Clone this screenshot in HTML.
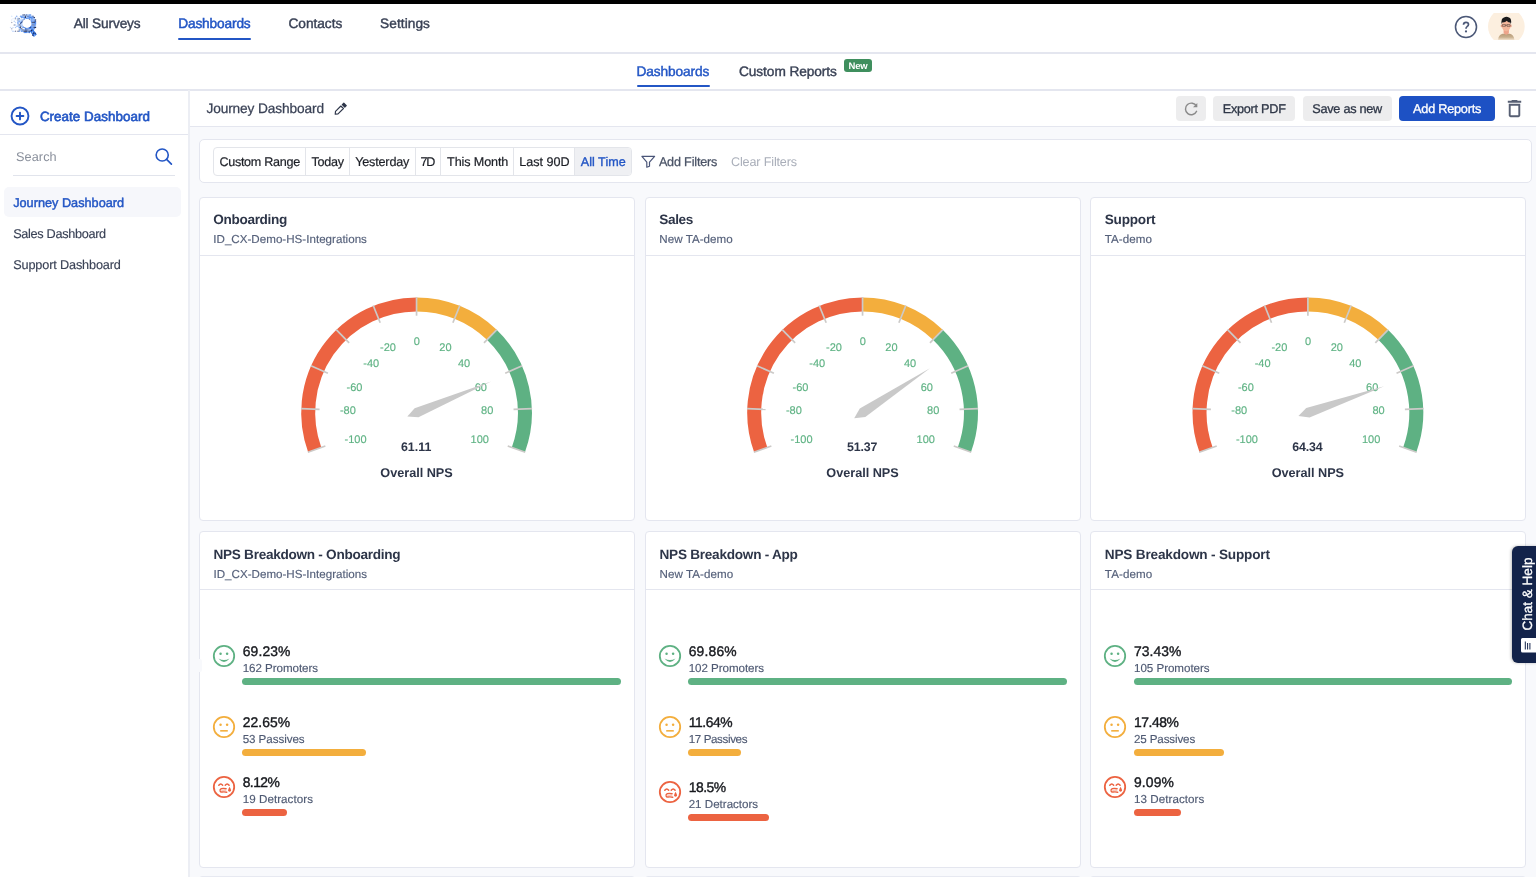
<!DOCTYPE html>
<html><head><meta charset="utf-8"><title>Dashboards</title>
<style>
html,body{margin:0;padding:0}
body{width:1536px;height:877px;overflow:hidden;position:relative;background:#fff;font-family:"Liberation Sans",sans-serif}
.t{position:absolute;white-space:nowrap;line-height:1;display:block}
.r{position:absolute;display:block}
#app{position:absolute;left:0;top:0;width:1536px;height:877px;will-change:transform;text-rendering:geometricPrecision;overflow:hidden}
</style></head><body>
<svg width="0" height="0" style="position:absolute"><defs>
<g id="face0" fill="none" stroke="#5eb183" stroke-width="1.8"><circle cx="12" cy="12" r="10.2"/><circle cx="8.55" cy="9.72" r="1.25" fill="#5eb183" stroke="none"/><circle cx="15.1" cy="9.72" r="1.25" fill="#5eb183" stroke="none"/><path d="M6.5 14.4Q12 21.6 17.5 14.4Q12 17.8 6.5 14.4Z" fill="#5eb183" stroke="none"/></g>
<g id="face1" fill="none" stroke="#f3ae3d" stroke-width="1.8"><circle cx="12" cy="12" r="10.2"/><circle cx="8.55" cy="9.74" r="1.25" fill="#f3ae3d" stroke="none"/><circle cx="15.1" cy="9.74" r="1.25" fill="#f3ae3d" stroke="none"/><path d="M8.2 15.83H15.8" stroke-width="1.6"/></g>
<g id="face2" fill="none" stroke="#ec6341" stroke-width="1.8" stroke-linecap="round" stroke-linejoin="round"><circle cx="12" cy="12" r="10.2"/><path d="M6.8 10.3Q8.7 7.7 10.7 10.3 M13.2 10.3Q15.2 7.7 17.1 10.3" stroke-width="1.45"/><path d="M14.1 13.7Q11 13.0 9.3 13.7Q7.7 14.5 8.1 16.0Q8.5 17.2 10 17.0Q12.5 16.6 14.7 17.2" stroke-width="1.4"/><path d="M9.8 15.3Q11.8 14.9 13.8 15.3" stroke-width="1.1" opacity="0.45"/><path d="M17.55 11.7Q19 14.2 19 15.3A1.45 1.45 0 0 1 16.1 15.3Q16.1 14.2 17.55 11.7Z" fill="#ec6341" stroke="none"/></g>
</defs></svg>

<div id="app">
<div class="r" style="left:0px;top:0px;width:1536px;height:4px;background:#000"></div>
<div class="r" style="left:0px;top:52px;width:1536px;height:1.5px;background:#e4e6ef"></div>
<span class="t" style="left:73.70px;top:17px;font-size:13.7px;letter-spacing:-0.152px;color:#3a4256;-webkit-text-stroke:0.4px #3a4256;">All Surveys</span>
<span class="t" style="left:178.20px;top:17px;font-size:13.7px;letter-spacing:-0.142px;color:#2356c5;-webkit-text-stroke:0.5px #2356c5;">Dashboards</span>
<div class="r" style="left:178.2px;top:38.2px;width:72.6px;height:2.1px;background:#2356c5;border-radius:1px"></div>
<span class="t" style="left:288.50px;top:17px;font-size:13.7px;letter-spacing:-0.038px;color:#3a4256;-webkit-text-stroke:0.4px #3a4256;">Contacts</span>
<span class="t" style="left:380.00px;top:17px;font-size:13.7px;letter-spacing:0.071px;color:#3a4256;-webkit-text-stroke:0.4px #3a4256;">Settings</span>
<div class="r" style="left:0px;top:89px;width:1536px;height:1.5px;background:#e4e6ef"></div>
<span class="t" style="left:636.50px;top:65px;font-size:13.7px;letter-spacing:-0.119px;color:#2356c5;-webkit-text-stroke:0.45px #2356c5;">Dashboards</span>
<div class="r" style="left:636.5px;top:84.5px;width:73px;height:2.1px;background:#2356c5;border-radius:1px"></div>
<span class="t" style="left:739.00px;top:65px;font-size:13.7px;letter-spacing:-0.075px;color:#3a4256;-webkit-text-stroke:0.4px #3a4256;">Custom Reports</span>
<div class="r" style="left:844px;top:59.2px;width:28px;height:12.8px;background:#3f8f5e;border-radius:3px"></div>
<span class="t" style="left:848.60px;top:62px;font-size:9.5px;letter-spacing:-0.267px;color:#fff;font-weight:bold;">New</span>
<div class="r" style="left:188px;top:90px;width:1.5px;height:787px;background:#eceef4"></div>
<span class="t" style="left:39.90px;top:110px;font-size:13.4px;letter-spacing:0.040px;color:#2356c5;-webkit-text-stroke:0.6px #2356c5;">Create Dashboard</span>
<div class="r" style="left:0px;top:134.3px;width:188px;height:1.2px;background:#e4e6ef"></div>
<span class="t" style="left:16.00px;top:151px;font-size:12.7px;letter-spacing:0.092px;color:#8a909c;">Search</span>
<div class="r" style="left:12.8px;top:175.2px;width:162.4px;height:1.3px;background:#e1e4ec"></div>
<div class="r" style="left:3.8px;top:187.4px;width:177.2px;height:29.2px;background:#f6f7fb;border-radius:5px"></div>
<span class="t" style="left:13.20px;top:197px;font-size:12.7px;letter-spacing:0.010px;color:#2356c5;-webkit-text-stroke:0.45px #2356c5;">Journey Dashboard</span>
<span class="t" style="left:13.20px;top:228px;font-size:12.7px;letter-spacing:-0.316px;color:#3a4256;-webkit-text-stroke:0.15px #3a4256;">Sales Dashboard</span>
<span class="t" style="left:13.20px;top:259px;font-size:12.7px;letter-spacing:-0.146px;color:#3a4256;-webkit-text-stroke:0.15px #3a4256;">Support Dashboard</span>
<div class="r" style="left:189.5px;top:90.5px;width:1347px;height:36px;background:#fff"></div>
<div class="r" style="left:189.5px;top:126px;width:1347px;height:1.2px;background:#e4e6ef"></div>
<div class="r" style="left:189.5px;top:127.2px;width:1347px;height:750px;background:#f8f9fc"></div>
<span class="t" style="left:206.40px;top:102px;font-size:13.7px;letter-spacing:-0.104px;color:#3a4256;-webkit-text-stroke:0.25px #3a4256;">Journey Dashboard</span>
<div class="r" style="left:1176.3px;top:95.5px;width:29.6px;height:25.7px;background:#ededee;border-radius:4px"></div>
<div class="r" style="left:1213.1px;top:95.5px;width:82.3px;height:25.7px;background:#ededee;border-radius:4px"></div>
<div class="r" style="left:1302.7px;top:95.5px;width:88.9px;height:25.7px;background:#ededee;border-radius:4px"></div>
<div class="r" style="left:1398.9px;top:95.5px;width:96.5px;height:25.7px;background:#1d51c4;border-radius:4px"></div>
<span class="t" style="left:1222.70px;top:103px;font-size:12.7px;letter-spacing:-0.259px;color:#2f3747;-webkit-text-stroke:0.3px #2f3747;">Export PDF</span>
<span class="t" style="left:1312.30px;top:103px;font-size:12.7px;letter-spacing:-0.272px;color:#2f3747;-webkit-text-stroke:0.3px #2f3747;">Save as new</span>
<span class="t" style="left:1413.10px;top:103px;font-size:12.7px;letter-spacing:-0.230px;color:#fff;-webkit-text-stroke:0.3px #fff;">Add Reports</span>
<div class="r" style="left:199px;top:138.5px;width:1333px;height:44px;background:#fff;border:1px solid #e4e6ef;border-radius:5px;box-sizing:border-box"></div>
<div class="r" style="left:213.2px;top:147.3px;width:419px;height:28.3px;background:#fff;border:1px solid #e3e5ea;border-radius:4px;box-sizing:border-box"></div>
<div class="r" style="left:574.7px;top:148.3px;width:56.5px;height:26.3px;background:#eff0f3;border-radius:0 3px 3px 0"></div>
<div class="r" style="left:305.0px;top:148.3px;width:1px;height:26.3px;background:#e3e5ea"></div>
<div class="r" style="left:348.9px;top:148.3px;width:1px;height:26.3px;background:#e3e5ea"></div>
<div class="r" style="left:414.5px;top:148.3px;width:1px;height:26.3px;background:#e3e5ea"></div>
<div class="r" style="left:440.1px;top:148.3px;width:1px;height:26.3px;background:#e3e5ea"></div>
<div class="r" style="left:513.0px;top:148.3px;width:1px;height:26.3px;background:#e3e5ea"></div>
<div class="r" style="left:574.2px;top:148.3px;width:1px;height:26.3px;background:#e3e5ea"></div>
<span class="t" style="left:219.40px;top:156px;font-size:12.6px;letter-spacing:-0.295px;color:#1c1f26;-webkit-text-stroke:0.2px #1c1f26;">Custom Range</span>
<span class="t" style="left:311.50px;top:156px;font-size:12.6px;letter-spacing:-0.281px;color:#1c1f26;-webkit-text-stroke:0.2px #1c1f26;">Today</span>
<span class="t" style="left:355.20px;top:156px;font-size:12.6px;letter-spacing:-0.172px;color:#1c1f26;-webkit-text-stroke:0.2px #1c1f26;">Yesterday</span>
<span class="t" style="left:420.50px;top:156px;font-size:12.6px;letter-spacing:-1.207px;color:#1c1f26;-webkit-text-stroke:0.2px #1c1f26;">7D</span>
<span class="t" style="left:447.10px;top:156px;font-size:12.6px;letter-spacing:-0.125px;color:#1c1f26;-webkit-text-stroke:0.2px #1c1f26;">This Month</span>
<span class="t" style="left:519.25px;top:156px;font-size:12.6px;letter-spacing:-0.026px;color:#1c1f26;-webkit-text-stroke:0.2px #1c1f26;">Last 90D</span>
<span class="t" style="left:580.70px;top:156px;font-size:12.6px;letter-spacing:0.041px;color:#2356c5;-webkit-text-stroke:0.35px #2356c5;">All Time</span>
<span class="t" style="left:658.90px;top:156px;font-size:12.6px;letter-spacing:-0.172px;color:#4a5366;-webkit-text-stroke:0.25px #4a5366;">Add Filters</span>
<span class="t" style="left:731.00px;top:156px;font-size:12.6px;letter-spacing:-0.151px;color:#a9aeb9;">Clear Filters</span>
<div class="r" style="left:199.1px;top:196.5px;width:435.8px;height:324px;background:#fff;border:1px solid #e4e6ef;border-radius:4px;box-sizing:border-box"></div>
<div class="r" style="left:199.6px;top:254.7px;width:434.8px;height:1px;background:#e4e6ef"></div>
<span class="t" style="left:213.30px;top:213px;font-size:13.6px;letter-spacing:-0.340px;color:#2d3548;font-weight:bold;">Onboarding</span>
<span class="t" style="left:213.30px;top:234px;font-size:11.6px;letter-spacing:0.011px;color:#55607a;-webkit-text-stroke:0.15px #55607a;">ID_CX-Demo-HS-Integrations</span>
<span class="t" style="left:344.59px;top:435px;font-size:11px;letter-spacing:0.000px;color:#5fb384;-webkit-text-stroke:0.15px #5fb384;">-100</span>
<span class="t" style="left:339.95px;top:406px;font-size:11px;letter-spacing:0.000px;color:#5fb384;-webkit-text-stroke:0.15px #5fb384;">-80</span>
<span class="t" style="left:346.55px;top:383px;font-size:11px;letter-spacing:0.000px;color:#5fb384;-webkit-text-stroke:0.15px #5fb384;">-60</span>
<span class="t" style="left:363.35px;top:359px;font-size:11px;letter-spacing:0.000px;color:#5fb384;-webkit-text-stroke:0.15px #5fb384;">-40</span>
<span class="t" style="left:380.05px;top:343px;font-size:11px;letter-spacing:0.000px;color:#5fb384;-webkit-text-stroke:0.15px #5fb384;">-20</span>
<span class="t" style="left:413.69px;top:337px;font-size:11px;letter-spacing:0.000px;color:#5fb384;-webkit-text-stroke:0.15px #5fb384;">0</span>
<span class="t" style="left:439.28px;top:343px;font-size:11px;letter-spacing:0.000px;color:#5fb384;-webkit-text-stroke:0.15px #5fb384;">20</span>
<span class="t" style="left:457.88px;top:359px;font-size:11px;letter-spacing:0.000px;color:#5fb384;-webkit-text-stroke:0.15px #5fb384;">40</span>
<span class="t" style="left:474.68px;top:383px;font-size:11px;letter-spacing:0.000px;color:#5fb384;-webkit-text-stroke:0.15px #5fb384;">60</span>
<span class="t" style="left:481.08px;top:406px;font-size:11px;letter-spacing:0.000px;color:#5fb384;-webkit-text-stroke:0.15px #5fb384;">80</span>
<span class="t" style="left:470.62px;top:435px;font-size:11px;letter-spacing:0.000px;color:#5fb384;-webkit-text-stroke:0.15px #5fb384;">100</span>
<span class="t" style="left:400.90px;top:441px;font-size:12.4px;letter-spacing:0.038px;color:#2d3548;font-weight:bold;">61.11</span>
<span class="t" style="left:380.30px;top:467px;font-size:12.7px;letter-spacing:-0.021px;color:#2d3548;font-weight:bold;">Overall NPS</span>
<div class="r" style="left:645.1px;top:196.5px;width:435.8px;height:324px;background:#fff;border:1px solid #e4e6ef;border-radius:4px;box-sizing:border-box"></div>
<div class="r" style="left:645.6px;top:254.7px;width:434.8px;height:1px;background:#e4e6ef"></div>
<span class="t" style="left:659.30px;top:213px;font-size:13.6px;letter-spacing:-0.385px;color:#2d3548;font-weight:bold;">Sales</span>
<span class="t" style="left:659.30px;top:234px;font-size:11.6px;letter-spacing:0.044px;color:#55607a;-webkit-text-stroke:0.15px #55607a;">New TA-demo</span>
<span class="t" style="left:790.59px;top:435px;font-size:11px;letter-spacing:0.000px;color:#5fb384;-webkit-text-stroke:0.15px #5fb384;">-100</span>
<span class="t" style="left:785.95px;top:406px;font-size:11px;letter-spacing:0.000px;color:#5fb384;-webkit-text-stroke:0.15px #5fb384;">-80</span>
<span class="t" style="left:792.55px;top:383px;font-size:11px;letter-spacing:0.000px;color:#5fb384;-webkit-text-stroke:0.15px #5fb384;">-60</span>
<span class="t" style="left:809.35px;top:359px;font-size:11px;letter-spacing:0.000px;color:#5fb384;-webkit-text-stroke:0.15px #5fb384;">-40</span>
<span class="t" style="left:826.05px;top:343px;font-size:11px;letter-spacing:0.000px;color:#5fb384;-webkit-text-stroke:0.15px #5fb384;">-20</span>
<span class="t" style="left:859.69px;top:337px;font-size:11px;letter-spacing:0.000px;color:#5fb384;-webkit-text-stroke:0.15px #5fb384;">0</span>
<span class="t" style="left:885.28px;top:343px;font-size:11px;letter-spacing:0.000px;color:#5fb384;-webkit-text-stroke:0.15px #5fb384;">20</span>
<span class="t" style="left:903.88px;top:359px;font-size:11px;letter-spacing:0.000px;color:#5fb384;-webkit-text-stroke:0.15px #5fb384;">40</span>
<span class="t" style="left:920.68px;top:383px;font-size:11px;letter-spacing:0.000px;color:#5fb384;-webkit-text-stroke:0.15px #5fb384;">60</span>
<span class="t" style="left:927.08px;top:406px;font-size:11px;letter-spacing:0.000px;color:#5fb384;-webkit-text-stroke:0.15px #5fb384;">80</span>
<span class="t" style="left:916.62px;top:435px;font-size:11px;letter-spacing:0.000px;color:#5fb384;-webkit-text-stroke:0.15px #5fb384;">100</span>
<span class="t" style="left:846.90px;top:441px;font-size:12.4px;letter-spacing:-0.133px;color:#2d3548;font-weight:bold;">51.37</span>
<span class="t" style="left:826.30px;top:467px;font-size:12.7px;letter-spacing:-0.021px;color:#2d3548;font-weight:bold;">Overall NPS</span>
<div class="r" style="left:1090.45px;top:196.5px;width:435.8px;height:324px;background:#fff;border:1px solid #e4e6ef;border-radius:4px;box-sizing:border-box"></div>
<div class="r" style="left:1090.95px;top:254.7px;width:434.8px;height:1px;background:#e4e6ef"></div>
<span class="t" style="left:1104.65px;top:213px;font-size:13.6px;letter-spacing:-0.187px;color:#2d3548;font-weight:bold;">Support</span>
<span class="t" style="left:1104.65px;top:234px;font-size:11.6px;letter-spacing:0.076px;color:#55607a;-webkit-text-stroke:0.15px #55607a;">TA-demo</span>
<span class="t" style="left:1235.94px;top:435px;font-size:11px;letter-spacing:0.000px;color:#5fb384;-webkit-text-stroke:0.15px #5fb384;">-100</span>
<span class="t" style="left:1231.30px;top:406px;font-size:11px;letter-spacing:0.000px;color:#5fb384;-webkit-text-stroke:0.15px #5fb384;">-80</span>
<span class="t" style="left:1237.90px;top:383px;font-size:11px;letter-spacing:0.000px;color:#5fb384;-webkit-text-stroke:0.15px #5fb384;">-60</span>
<span class="t" style="left:1254.70px;top:359px;font-size:11px;letter-spacing:0.000px;color:#5fb384;-webkit-text-stroke:0.15px #5fb384;">-40</span>
<span class="t" style="left:1271.40px;top:343px;font-size:11px;letter-spacing:0.000px;color:#5fb384;-webkit-text-stroke:0.15px #5fb384;">-20</span>
<span class="t" style="left:1305.04px;top:337px;font-size:11px;letter-spacing:0.000px;color:#5fb384;-webkit-text-stroke:0.15px #5fb384;">0</span>
<span class="t" style="left:1330.63px;top:343px;font-size:11px;letter-spacing:0.000px;color:#5fb384;-webkit-text-stroke:0.15px #5fb384;">20</span>
<span class="t" style="left:1349.23px;top:359px;font-size:11px;letter-spacing:0.000px;color:#5fb384;-webkit-text-stroke:0.15px #5fb384;">40</span>
<span class="t" style="left:1366.03px;top:383px;font-size:11px;letter-spacing:0.000px;color:#5fb384;-webkit-text-stroke:0.15px #5fb384;">60</span>
<span class="t" style="left:1372.43px;top:406px;font-size:11px;letter-spacing:0.000px;color:#5fb384;-webkit-text-stroke:0.15px #5fb384;">80</span>
<span class="t" style="left:1361.97px;top:435px;font-size:11px;letter-spacing:0.000px;color:#5fb384;-webkit-text-stroke:0.15px #5fb384;">100</span>
<span class="t" style="left:1292.25px;top:441px;font-size:12.4px;letter-spacing:-0.133px;color:#2d3548;font-weight:bold;">64.34</span>
<span class="t" style="left:1271.65px;top:467px;font-size:12.7px;letter-spacing:-0.021px;color:#2d3548;font-weight:bold;">Overall NPS</span>
<svg class="r" style="left:0;top:0" width="1536" height="877" viewBox="0 0 1536 877"><path d="M314.73 449.81 A108.35 108.35 0 0 1 416.55 304.40" stroke="#ec6341" stroke-width="14" fill="none"/><path d="M416.55 304.40 A108.35 108.35 0 0 1 491.82 334.81" stroke="#f3ae3d" stroke-width="14" fill="none"/><path d="M491.82 334.81 A108.35 108.35 0 0 1 518.37 449.81" stroke="#5eb183" stroke-width="14" fill="none"/><line x1="307.87" y1="452.30" x2="325.35" y2="445.94" stroke="#cccac8" stroke-width="1.7"/><line x1="300.97" y1="408.71" x2="319.56" y2="409.36" stroke="#cccac8" stroke-width="1.7"/><line x1="310.90" y1="365.71" x2="327.89" y2="373.28" stroke="#cccac8" stroke-width="1.7"/><line x1="336.21" y1="329.56" x2="349.13" y2="342.94" stroke="#cccac8" stroke-width="1.7"/><line x1="373.23" y1="305.52" x2="380.19" y2="322.77" stroke="#cccac8" stroke-width="1.7"/><line x1="416.55" y1="297.10" x2="416.55" y2="315.70" stroke="#cccac8" stroke-width="1.7"/><line x1="459.87" y1="305.52" x2="452.91" y2="322.77" stroke="#cccac8" stroke-width="1.7"/><line x1="496.89" y1="329.56" x2="483.97" y2="342.94" stroke="#cccac8" stroke-width="1.7"/><line x1="522.20" y1="365.71" x2="505.21" y2="373.28" stroke="#cccac8" stroke-width="1.7"/><line x1="532.13" y1="408.71" x2="513.54" y2="409.36" stroke="#cccac8" stroke-width="1.7"/><line x1="525.23" y1="452.30" x2="507.75" y2="445.94" stroke="#cccac8" stroke-width="1.7"/><polygon points="407.33,416.62 414.61,408.14 491.05,381.47 418.49,417.36" fill="#c9c9c9"/><path d="M760.73 449.81 A108.35 108.35 0 0 1 862.55 304.40" stroke="#ec6341" stroke-width="14" fill="none"/><path d="M862.55 304.40 A108.35 108.35 0 0 1 937.82 334.81" stroke="#f3ae3d" stroke-width="14" fill="none"/><path d="M937.82 334.81 A108.35 108.35 0 0 1 964.37 449.81" stroke="#5eb183" stroke-width="14" fill="none"/><line x1="753.87" y1="452.30" x2="771.35" y2="445.94" stroke="#cccac8" stroke-width="1.7"/><line x1="746.97" y1="408.71" x2="765.56" y2="409.36" stroke="#cccac8" stroke-width="1.7"/><line x1="756.90" y1="365.71" x2="773.89" y2="373.28" stroke="#cccac8" stroke-width="1.7"/><line x1="782.21" y1="329.56" x2="795.13" y2="342.94" stroke="#cccac8" stroke-width="1.7"/><line x1="819.23" y1="305.52" x2="826.19" y2="322.77" stroke="#cccac8" stroke-width="1.7"/><line x1="862.55" y1="297.10" x2="862.55" y2="315.70" stroke="#cccac8" stroke-width="1.7"/><line x1="905.87" y1="305.52" x2="898.91" y2="322.77" stroke="#cccac8" stroke-width="1.7"/><line x1="942.89" y1="329.56" x2="929.97" y2="342.94" stroke="#cccac8" stroke-width="1.7"/><line x1="968.20" y1="365.71" x2="951.21" y2="373.28" stroke="#cccac8" stroke-width="1.7"/><line x1="978.13" y1="408.71" x2="959.54" y2="409.36" stroke="#cccac8" stroke-width="1.7"/><line x1="971.23" y1="452.30" x2="953.75" y2="445.94" stroke="#cccac8" stroke-width="1.7"/><polygon points="854.21,418.27 859.79,408.58 929.93,368.16 865.31,416.92" fill="#c9c9c9"/><path d="M1206.08 449.81 A108.35 108.35 0 0 1 1307.90 304.40" stroke="#ec6341" stroke-width="14" fill="none"/><path d="M1307.90 304.40 A108.35 108.35 0 0 1 1383.17 334.81" stroke="#f3ae3d" stroke-width="14" fill="none"/><path d="M1383.17 334.81 A108.35 108.35 0 0 1 1409.72 449.81" stroke="#5eb183" stroke-width="14" fill="none"/><line x1="1199.22" y1="452.30" x2="1216.70" y2="445.94" stroke="#cccac8" stroke-width="1.7"/><line x1="1192.32" y1="408.71" x2="1210.91" y2="409.36" stroke="#cccac8" stroke-width="1.7"/><line x1="1202.25" y1="365.71" x2="1219.24" y2="373.28" stroke="#cccac8" stroke-width="1.7"/><line x1="1227.56" y1="329.56" x2="1240.48" y2="342.94" stroke="#cccac8" stroke-width="1.7"/><line x1="1264.58" y1="305.52" x2="1271.54" y2="322.77" stroke="#cccac8" stroke-width="1.7"/><line x1="1307.90" y1="297.10" x2="1307.90" y2="315.70" stroke="#cccac8" stroke-width="1.7"/><line x1="1351.22" y1="305.52" x2="1344.26" y2="322.77" stroke="#cccac8" stroke-width="1.7"/><line x1="1388.24" y1="329.56" x2="1375.32" y2="342.94" stroke="#cccac8" stroke-width="1.7"/><line x1="1413.55" y1="365.71" x2="1396.56" y2="373.28" stroke="#cccac8" stroke-width="1.7"/><line x1="1423.48" y1="408.71" x2="1404.89" y2="409.36" stroke="#cccac8" stroke-width="1.7"/><line x1="1416.58" y1="452.30" x2="1399.10" y2="445.94" stroke="#cccac8" stroke-width="1.7"/><polygon points="1298.46,416.04 1306.25,408.03 1384.19,386.14 1309.55,417.47" fill="#c9c9c9"/></svg>
<div class="r" style="left:199.1px;top:531px;width:435.8px;height:336.5px;background:#fff;border:1px solid #e4e6ef;border-radius:4px;box-sizing:border-box"></div>
<div class="r" style="left:199.6px;top:589.2px;width:434.8px;height:1px;background:#e4e6ef"></div>
<span class="t" style="left:213.50px;top:548px;font-size:13.6px;letter-spacing:-0.280px;color:#2d3548;font-weight:bold;">NPS Breakdown - Onboarding</span>
<span class="t" style="left:213.50px;top:569px;font-size:11.6px;letter-spacing:0.007px;color:#55607a;-webkit-text-stroke:0.15px #55607a;">ID_CX-Demo-HS-Integrations</span>
<span class="t" style="left:242.70px;top:645px;font-size:13.9px;letter-spacing:0.131px;color:#16181d;-webkit-text-stroke:0.38px #16181d;">69.23%</span>
<span class="t" style="left:242.70px;top:663px;font-size:11.6px;letter-spacing:-0.057px;color:#4f5a73;-webkit-text-stroke:0.15px #4f5a73;">162 Promoters</span>
<div class="r" style="left:242.39999999999998px;top:677.6px;width:378.3px;height:7.4px;background:#5eb183;border-radius:4px"></div>
<svg class="r" style="left:212.05px;top:643.60px" width="24" height="24" viewBox="0 0 24 24"><use href="#face0"/></svg>
<span class="t" style="left:242.70px;top:716px;font-size:13.9px;letter-spacing:0.051px;color:#16181d;-webkit-text-stroke:0.38px #16181d;">22.65%</span>
<span class="t" style="left:242.70px;top:734px;font-size:11.6px;letter-spacing:-0.064px;color:#4f5a73;-webkit-text-stroke:0.15px #4f5a73;">53 Passives</span>
<div class="r" style="left:242.39999999999998px;top:748.6px;width:123.89999999999999px;height:7.4px;background:#f3ae3d;border-radius:4px"></div>
<svg class="r" style="left:212.05px;top:715.06px" width="24" height="24" viewBox="0 0 24 24"><use href="#face1"/></svg>
<span class="t" style="left:242.70px;top:776px;font-size:13.9px;letter-spacing:-0.553px;color:#16181d;-webkit-text-stroke:0.38px #16181d;">8.12%</span>
<span class="t" style="left:242.70px;top:794px;font-size:11.6px;letter-spacing:0.056px;color:#4f5a73;-webkit-text-stroke:0.15px #4f5a73;">19 Detractors</span>
<div class="r" style="left:242.39999999999998px;top:808.6px;width:44.4px;height:7.4px;background:#ec6341;border-radius:4px"></div>
<svg class="r" style="left:212.05px;top:774.80px" width="24" height="24" viewBox="0 0 24 24"><use href="#face2"/></svg>
<div class="r" style="left:645.1px;top:531px;width:435.8px;height:336.5px;background:#fff;border:1px solid #e4e6ef;border-radius:4px;box-sizing:border-box"></div>
<div class="r" style="left:645.6px;top:589.2px;width:434.8px;height:1px;background:#e4e6ef"></div>
<span class="t" style="left:659.50px;top:548px;font-size:13.6px;letter-spacing:-0.254px;color:#2d3548;font-weight:bold;">NPS Breakdown - App</span>
<span class="t" style="left:659.50px;top:569px;font-size:11.6px;letter-spacing:0.074px;color:#55607a;-webkit-text-stroke:0.15px #55607a;">New TA-demo</span>
<span class="t" style="left:688.70px;top:645px;font-size:13.9px;letter-spacing:0.171px;color:#16181d;-webkit-text-stroke:0.38px #16181d;">69.86%</span>
<span class="t" style="left:688.70px;top:663px;font-size:11.6px;letter-spacing:-0.057px;color:#4f5a73;-webkit-text-stroke:0.15px #4f5a73;">102 Promoters</span>
<div class="r" style="left:688.4000000000001px;top:677.6px;width:378.3px;height:7.4px;background:#5eb183;border-radius:4px"></div>
<svg class="r" style="left:658.05px;top:643.60px" width="24" height="24" viewBox="0 0 24 24"><use href="#face0"/></svg>
<span class="t" style="left:688.70px;top:716px;font-size:13.9px;letter-spacing:-0.422px;color:#16181d;-webkit-text-stroke:0.38px #16181d;">11.64%</span>
<span class="t" style="left:688.70px;top:734px;font-size:11.6px;letter-spacing:-0.374px;color:#4f5a73;-webkit-text-stroke:0.15px #4f5a73;">17 Passives</span>
<div class="r" style="left:688.4000000000001px;top:748.6px;width:52.5px;height:7.4px;background:#f3ae3d;border-radius:4px"></div>
<svg class="r" style="left:658.05px;top:715.06px" width="24" height="24" viewBox="0 0 24 24"><use href="#face1"/></svg>
<span class="t" style="left:688.70px;top:781px;font-size:13.9px;letter-spacing:-0.503px;color:#16181d;-webkit-text-stroke:0.38px #16181d;">18.5%</span>
<span class="t" style="left:688.70px;top:799px;font-size:11.6px;letter-spacing:-0.011px;color:#4f5a73;-webkit-text-stroke:0.15px #4f5a73;">21 Detractors</span>
<div class="r" style="left:688.4000000000001px;top:813.6px;width:81.0px;height:7.4px;background:#ec6341;border-radius:4px"></div>
<svg class="r" style="left:658.05px;top:779.80px" width="24" height="24" viewBox="0 0 24 24"><use href="#face2"/></svg>
<div class="r" style="left:1090.45px;top:531px;width:435.8px;height:336.5px;background:#fff;border:1px solid #e4e6ef;border-radius:4px;box-sizing:border-box"></div>
<div class="r" style="left:1090.95px;top:589.2px;width:434.8px;height:1px;background:#e4e6ef"></div>
<span class="t" style="left:1104.85px;top:548px;font-size:13.6px;letter-spacing:-0.185px;color:#2d3548;font-weight:bold;">NPS Breakdown - Support</span>
<span class="t" style="left:1104.85px;top:569px;font-size:11.6px;letter-spacing:0.109px;color:#55607a;-webkit-text-stroke:0.15px #55607a;">TA-demo</span>
<span class="t" style="left:1134.05px;top:645px;font-size:13.9px;letter-spacing:0.031px;color:#16181d;-webkit-text-stroke:0.38px #16181d;">73.43%</span>
<span class="t" style="left:1134.05px;top:663px;font-size:11.6px;letter-spacing:-0.040px;color:#4f5a73;-webkit-text-stroke:0.15px #4f5a73;">105 Promoters</span>
<div class="r" style="left:1133.75px;top:677.6px;width:378.3px;height:7.4px;background:#5eb183;border-radius:4px"></div>
<svg class="r" style="left:1103.40px;top:643.60px" width="24" height="24" viewBox="0 0 24 24"><use href="#face0"/></svg>
<span class="t" style="left:1134.05px;top:716px;font-size:13.9px;letter-spacing:-0.469px;color:#16181d;-webkit-text-stroke:0.38px #16181d;">17.48%</span>
<span class="t" style="left:1134.05px;top:734px;font-size:11.6px;letter-spacing:-0.134px;color:#4f5a73;-webkit-text-stroke:0.15px #4f5a73;">25 Passives</span>
<div class="r" style="left:1133.75px;top:748.6px;width:90.3px;height:7.4px;background:#f3ae3d;border-radius:4px"></div>
<svg class="r" style="left:1103.40px;top:715.06px" width="24" height="24" viewBox="0 0 24 24"><use href="#face1"/></svg>
<span class="t" style="left:1134.05px;top:776px;font-size:13.9px;letter-spacing:0.097px;color:#16181d;-webkit-text-stroke:0.38px #16181d;">9.09%</span>
<span class="t" style="left:1134.05px;top:794px;font-size:11.6px;letter-spacing:0.048px;color:#4f5a73;-webkit-text-stroke:0.15px #4f5a73;">13 Detractors</span>
<div class="r" style="left:1133.75px;top:808.6px;width:46.9px;height:7.4px;background:#ec6341;border-radius:4px"></div>
<svg class="r" style="left:1103.40px;top:774.80px" width="24" height="24" viewBox="0 0 24 24"><use href="#face2"/></svg>
<div class="r" style="left:198.4px;top:659.2px;width:3.9px;height:12.8px;background:#f8f9fc;border-radius:0 2px 2px 0"></div>
<div class="r" style="left:199.1px;top:876.4px;width:435.8px;height:6px;background:#fff;border:1px solid #e4e6ef;border-radius:4px;box-sizing:border-box;opacity:.8"></div>
<div class="r" style="left:645.1px;top:876.4px;width:435.8px;height:6px;background:#fff;border:1px solid #e4e6ef;border-radius:4px;box-sizing:border-box;opacity:.8"></div>
<div class="r" style="left:1090.45px;top:876.4px;width:435.8px;height:6px;background:#fff;border:1px solid #e4e6ef;border-radius:4px;box-sizing:border-box;opacity:.8"></div>
<svg class="r" style="left:0px;top:4px" width="60" height="46" viewBox="0 4 60 46"><rect x="22.38" y="14.38" width="1.25" height="1.25" fill="#23448f" opacity="0.93" transform="rotate(30 23.00 15.00)"/><rect x="23.62" y="14.38" width="1.25" height="1.25" fill="#1a2750" opacity="0.96" transform="rotate(30 24.25 15.00)"/><rect x="24.88" y="14.38" width="1.25" height="1.25" fill="#8fb8f6" opacity="0.98" transform="rotate(30 25.50 15.00)"/><rect x="26.12" y="14.38" width="1.25" height="1.25" fill="#23448f" opacity="1.00" transform="rotate(30 26.75 15.00)"/><rect x="27.38" y="14.38" width="1.25" height="1.25" fill="#8fb8f6" opacity="1.00" transform="rotate(30 28.00 15.00)"/><rect x="28.62" y="14.38" width="1.25" height="1.25" fill="#3f7fe9" opacity="1.00" transform="rotate(30 29.25 15.00)"/><rect x="29.88" y="14.38" width="1.25" height="1.25" fill="#3f7fe9" opacity="1.00" transform="rotate(30 30.50 15.00)"/><rect x="11.12" y="15.62" width="1.25" height="1.25" fill="#8fb8f6" opacity="0.40" transform="rotate(30 11.75 16.25)"/><rect x="16.12" y="15.62" width="1.25" height="1.25" fill="#3f7fe9" opacity="0.68" transform="rotate(30 16.75 16.25)"/><rect x="19.88" y="15.62" width="1.25" height="1.25" fill="#3f7fe9" opacity="0.88" transform="rotate(30 20.50 16.25)"/><rect x="21.12" y="15.62" width="1.25" height="1.25" fill="#3f7fe9" opacity="0.91" transform="rotate(30 21.75 16.25)"/><rect x="22.38" y="15.62" width="1.25" height="1.25" fill="#3f7fe9" opacity="0.93" transform="rotate(30 23.00 16.25)"/><rect x="23.62" y="15.62" width="1.25" height="1.25" fill="#8fb8f6" opacity="0.96" transform="rotate(30 24.25 16.25)"/><rect x="24.88" y="15.62" width="1.25" height="1.25" fill="#1a2750" opacity="0.98" transform="rotate(30 25.50 16.25)"/><rect x="26.12" y="15.62" width="1.25" height="1.25" fill="#8fb8f6" opacity="1.00" transform="rotate(30 26.75 16.25)"/><rect x="27.38" y="15.62" width="1.25" height="1.25" fill="#23448f" opacity="1.00" transform="rotate(30 28.00 16.25)"/><rect x="28.62" y="15.62" width="1.25" height="1.25" fill="#3f7fe9" opacity="1.00" transform="rotate(30 29.25 16.25)"/><rect x="29.88" y="15.62" width="1.25" height="1.25" fill="#6fa2f2" opacity="1.00" transform="rotate(30 30.50 16.25)"/><rect x="31.12" y="15.62" width="1.25" height="1.25" fill="#6fa2f2" opacity="1.00" transform="rotate(30 31.75 16.25)"/><rect x="32.38" y="15.62" width="1.25" height="1.25" fill="#23448f" opacity="1.00" transform="rotate(30 33.00 16.25)"/><rect x="14.88" y="16.88" width="1.25" height="1.25" fill="#6fa2f2" opacity="0.61" transform="rotate(30 15.50 17.50)"/><rect x="17.38" y="16.88" width="1.25" height="1.25" fill="#cfe0fb" opacity="0.74" transform="rotate(30 18.00 17.50)"/><rect x="19.88" y="16.88" width="1.25" height="1.25" fill="#cfe0fb" opacity="0.88" transform="rotate(30 20.50 17.50)"/><rect x="21.12" y="16.88" width="1.25" height="1.25" fill="#3f7fe9" opacity="0.91" transform="rotate(30 21.75 17.50)"/><rect x="22.38" y="16.88" width="1.25" height="1.25" fill="#3f7fe9" opacity="0.93" transform="rotate(30 23.00 17.50)"/><rect x="23.62" y="16.88" width="1.25" height="1.25" fill="#3f7fe9" opacity="0.96" transform="rotate(30 24.25 17.50)"/><rect x="24.88" y="16.88" width="1.25" height="1.25" fill="#1c2b5e" opacity="0.98" transform="rotate(30 25.50 17.50)"/><rect x="26.12" y="16.88" width="1.25" height="1.25" fill="#8fb8f6" opacity="1.00" transform="rotate(30 26.75 17.50)"/><rect x="27.38" y="16.88" width="1.25" height="1.25" fill="#6fa2f2" opacity="1.00" transform="rotate(30 28.00 17.50)"/><rect x="28.62" y="16.88" width="1.25" height="1.25" fill="#3f7fe9" opacity="1.00" transform="rotate(30 29.25 17.50)"/><rect x="29.88" y="16.88" width="1.25" height="1.25" fill="#3f7fe9" opacity="1.00" transform="rotate(30 30.50 17.50)"/><rect x="31.12" y="16.88" width="1.25" height="1.25" fill="#3f7fe9" opacity="1.00" transform="rotate(30 31.75 17.50)"/><rect x="32.38" y="16.88" width="1.25" height="1.25" fill="#3f7fe9" opacity="1.00" transform="rotate(30 33.00 17.50)"/><rect x="33.62" y="16.88" width="1.25" height="1.25" fill="#1a2750" opacity="1.00" transform="rotate(30 34.25 17.50)"/><rect x="12.38" y="18.12" width="1.25" height="1.25" fill="#cfe0fb" opacity="0.47" transform="rotate(30 13.00 18.75)"/><rect x="13.62" y="18.12" width="1.25" height="1.25" fill="#cfe0fb" opacity="0.54" transform="rotate(30 14.25 18.75)"/><rect x="14.88" y="18.12" width="1.25" height="1.25" fill="#55607a" opacity="0.61" transform="rotate(30 15.50 18.75)"/><rect x="17.38" y="18.12" width="1.25" height="1.25" fill="#3f7fe9" opacity="0.74" transform="rotate(30 18.00 18.75)"/><rect x="18.62" y="18.12" width="1.25" height="1.25" fill="#55607a" opacity="0.86" transform="rotate(30 19.25 18.75)"/><rect x="21.12" y="18.12" width="1.25" height="1.25" fill="#cfe0fb" opacity="0.91" transform="rotate(30 21.75 18.75)"/><rect x="23.62" y="18.12" width="1.25" height="1.25" fill="#3f7fe9" opacity="0.96" transform="rotate(30 24.25 18.75)"/><rect x="24.88" y="18.12" width="1.25" height="1.25" fill="#8fb8f6" opacity="0.98" transform="rotate(30 25.50 18.75)"/><rect x="26.12" y="18.12" width="1.25" height="1.25" fill="#3f7fe9" opacity="1.00" transform="rotate(30 26.75 18.75)"/><rect x="27.38" y="18.12" width="1.25" height="1.25" fill="#3f7fe9" opacity="1.00" transform="rotate(30 28.00 18.75)"/><rect x="28.62" y="18.12" width="1.25" height="1.25" fill="#3f7fe9" opacity="1.00" transform="rotate(30 29.25 18.75)"/><rect x="29.88" y="18.12" width="1.25" height="1.25" fill="#8fb8f6" opacity="1.00" transform="rotate(30 30.50 18.75)"/><rect x="31.12" y="18.12" width="1.25" height="1.25" fill="#3f7fe9" opacity="1.00" transform="rotate(30 31.75 18.75)"/><rect x="32.38" y="18.12" width="1.25" height="1.25" fill="#3f7fe9" opacity="1.00" transform="rotate(30 33.00 18.75)"/><rect x="33.62" y="18.12" width="1.25" height="1.25" fill="#8fb8f6" opacity="1.00" transform="rotate(30 34.25 18.75)"/><rect x="11.12" y="19.38" width="1.25" height="1.25" fill="#a9c8f8" opacity="0.40" transform="rotate(30 11.75 20.00)"/><rect x="16.12" y="19.38" width="1.25" height="1.25" fill="#cfe0fb" opacity="0.68" transform="rotate(30 16.75 20.00)"/><rect x="17.38" y="19.38" width="1.25" height="1.25" fill="#55607a" opacity="0.83" transform="rotate(30 18.00 20.00)"/><rect x="18.62" y="19.38" width="1.25" height="1.25" fill="#8fb8f6" opacity="0.86" transform="rotate(30 19.25 20.00)"/><rect x="19.88" y="19.38" width="1.25" height="1.25" fill="#a9c8f8" opacity="0.88" transform="rotate(30 20.50 20.00)"/><rect x="21.12" y="19.38" width="1.25" height="1.25" fill="#a9c8f8" opacity="0.91" transform="rotate(30 21.75 20.00)"/><rect x="22.38" y="19.38" width="1.25" height="1.25" fill="#3f7fe9" opacity="0.93" transform="rotate(30 23.00 20.00)"/><rect x="23.62" y="19.38" width="1.25" height="1.25" fill="#23448f" opacity="0.96" transform="rotate(30 24.25 20.00)"/><rect x="28.62" y="19.38" width="1.25" height="1.25" fill="#1c2b5e" opacity="1.00" transform="rotate(30 29.25 20.00)"/><rect x="29.88" y="19.38" width="1.25" height="1.25" fill="#8fb8f6" opacity="1.00" transform="rotate(30 30.50 20.00)"/><rect x="31.12" y="19.38" width="1.25" height="1.25" fill="#3f7fe9" opacity="1.00" transform="rotate(30 31.75 20.00)"/><rect x="32.38" y="19.38" width="1.25" height="1.25" fill="#3f7fe9" opacity="1.00" transform="rotate(30 33.00 20.00)"/><rect x="33.62" y="19.38" width="1.25" height="1.25" fill="#3f7fe9" opacity="1.00" transform="rotate(30 34.25 20.00)"/><rect x="34.88" y="19.38" width="1.25" height="1.25" fill="#1c2b5e" opacity="1.00" transform="rotate(30 35.50 20.00)"/><rect x="13.62" y="20.62" width="1.25" height="1.25" fill="#6fa2f2" opacity="0.54" transform="rotate(30 14.25 21.25)"/><rect x="17.38" y="20.62" width="1.25" height="1.25" fill="#6fa2f2" opacity="0.83" transform="rotate(30 18.00 21.25)"/><rect x="18.62" y="20.62" width="1.25" height="1.25" fill="#3f7fe9" opacity="0.86" transform="rotate(30 19.25 21.25)"/><rect x="19.88" y="20.62" width="1.25" height="1.25" fill="#a9c8f8" opacity="0.88" transform="rotate(30 20.50 21.25)"/><rect x="21.12" y="20.62" width="1.25" height="1.25" fill="#3f7fe9" opacity="0.91" transform="rotate(30 21.75 21.25)"/><rect x="22.38" y="20.62" width="1.25" height="1.25" fill="#1a2750" opacity="0.93" transform="rotate(30 23.00 21.25)"/><rect x="23.62" y="20.62" width="1.25" height="1.25" fill="#1c2b5e" opacity="0.80" transform="rotate(30 24.25 21.25)"/><rect x="29.88" y="20.62" width="1.25" height="1.25" fill="#2a62c9" opacity="1.00" transform="rotate(30 30.50 21.25)"/><rect x="31.12" y="20.62" width="1.25" height="1.25" fill="#3f7fe9" opacity="1.00" transform="rotate(30 31.75 21.25)"/><rect x="32.38" y="20.62" width="1.25" height="1.25" fill="#3f7fe9" opacity="1.00" transform="rotate(30 33.00 21.25)"/><rect x="33.62" y="20.62" width="1.25" height="1.25" fill="#2a62c9" opacity="1.00" transform="rotate(30 34.25 21.25)"/><rect x="34.88" y="20.62" width="1.25" height="1.25" fill="#23448f" opacity="1.00" transform="rotate(30 35.50 21.25)"/><rect x="11.12" y="21.88" width="1.25" height="1.25" fill="#1c2b5e" opacity="0.40" transform="rotate(30 11.75 22.50)"/><rect x="14.88" y="21.88" width="1.25" height="1.25" fill="#a9c8f8" opacity="0.61" transform="rotate(30 15.50 22.50)"/><rect x="17.38" y="21.88" width="1.25" height="1.25" fill="#3f7fe9" opacity="0.83" transform="rotate(30 18.00 22.50)"/><rect x="18.62" y="21.88" width="1.25" height="1.25" fill="#cfe0fb" opacity="0.86" transform="rotate(30 19.25 22.50)"/><rect x="19.88" y="21.88" width="1.25" height="1.25" fill="#3f7fe9" opacity="0.88" transform="rotate(30 20.50 22.50)"/><rect x="21.12" y="21.88" width="1.25" height="1.25" fill="#1c2b5e" opacity="0.91" transform="rotate(30 21.75 22.50)"/><rect x="22.38" y="21.88" width="1.25" height="1.25" fill="#3f7fe9" opacity="0.93" transform="rotate(30 23.00 22.50)"/><rect x="31.12" y="21.88" width="1.25" height="1.25" fill="#2a62c9" opacity="1.00" transform="rotate(30 31.75 22.50)"/><rect x="32.38" y="21.88" width="1.25" height="1.25" fill="#1a2750" opacity="1.00" transform="rotate(30 33.00 22.50)"/><rect x="33.62" y="21.88" width="1.25" height="1.25" fill="#1c2b5e" opacity="1.00" transform="rotate(30 34.25 22.50)"/><rect x="34.88" y="21.88" width="1.25" height="1.25" fill="#3f7fe9" opacity="1.00" transform="rotate(30 35.50 22.50)"/><rect x="17.38" y="23.12" width="1.25" height="1.25" fill="#3f7fe9" opacity="0.83" transform="rotate(30 18.00 23.75)"/><rect x="19.88" y="23.12" width="1.25" height="1.25" fill="#1c2b5e" opacity="0.88" transform="rotate(30 20.50 23.75)"/><rect x="21.12" y="23.12" width="1.25" height="1.25" fill="#6fa2f2" opacity="0.91" transform="rotate(30 21.75 23.75)"/><rect x="22.38" y="23.12" width="1.25" height="1.25" fill="#8fb8f6" opacity="0.80" transform="rotate(30 23.00 23.75)"/><rect x="23.62" y="23.12" width="1.25" height="1.25" fill="#cfe0fb" opacity="0.80" transform="rotate(30 24.25 23.75)"/><rect x="31.12" y="23.12" width="1.25" height="1.25" fill="#3f7fe9" opacity="1.00" transform="rotate(30 31.75 23.75)"/><rect x="32.38" y="23.12" width="1.25" height="1.25" fill="#3f7fe9" opacity="1.00" transform="rotate(30 33.00 23.75)"/><rect x="33.62" y="23.12" width="1.25" height="1.25" fill="#3f7fe9" opacity="1.00" transform="rotate(30 34.25 23.75)"/><rect x="34.88" y="23.12" width="1.25" height="1.25" fill="#3f7fe9" opacity="1.00" transform="rotate(30 35.50 23.75)"/><rect x="13.62" y="24.38" width="1.25" height="1.25" fill="#1c2b5e" opacity="0.54" transform="rotate(30 14.25 25.00)"/><rect x="14.88" y="24.38" width="1.25" height="1.25" fill="#6fa2f2" opacity="0.61" transform="rotate(30 15.50 25.00)"/><rect x="17.38" y="24.38" width="1.25" height="1.25" fill="#8fb8f6" opacity="0.83" transform="rotate(30 18.00 25.00)"/><rect x="18.62" y="24.38" width="1.25" height="1.25" fill="#1c2b5e" opacity="0.86" transform="rotate(30 19.25 25.00)"/><rect x="19.88" y="24.38" width="1.25" height="1.25" fill="#6fa2f2" opacity="0.88" transform="rotate(30 20.50 25.00)"/><rect x="21.12" y="24.38" width="1.25" height="1.25" fill="#a9c8f8" opacity="0.91" transform="rotate(30 21.75 25.00)"/><rect x="22.38" y="24.38" width="1.25" height="1.25" fill="#6fa2f2" opacity="0.93" transform="rotate(30 23.00 25.00)"/><rect x="23.62" y="24.38" width="1.25" height="1.25" fill="#55607a" opacity="0.80" transform="rotate(30 24.25 25.00)"/><rect x="31.12" y="24.38" width="1.25" height="1.25" fill="#3f7fe9" opacity="1.00" transform="rotate(30 31.75 25.00)"/><rect x="32.38" y="24.38" width="1.25" height="1.25" fill="#1c2b5e" opacity="1.00" transform="rotate(30 33.00 25.00)"/><rect x="33.62" y="24.38" width="1.25" height="1.25" fill="#2a62c9" opacity="1.00" transform="rotate(30 34.25 25.00)"/><rect x="34.88" y="24.38" width="1.25" height="1.25" fill="#3f7fe9" opacity="1.00" transform="rotate(30 35.50 25.00)"/><rect x="16.12" y="25.62" width="1.25" height="1.25" fill="#6fa2f2" opacity="0.68" transform="rotate(30 16.75 26.25)"/><rect x="17.38" y="25.62" width="1.25" height="1.25" fill="#6fa2f2" opacity="0.83" transform="rotate(30 18.00 26.25)"/><rect x="18.62" y="25.62" width="1.25" height="1.25" fill="#a9c8f8" opacity="0.86" transform="rotate(30 19.25 26.25)"/><rect x="19.88" y="25.62" width="1.25" height="1.25" fill="#55607a" opacity="0.88" transform="rotate(30 20.50 26.25)"/><rect x="21.12" y="25.62" width="1.25" height="1.25" fill="#6fa2f2" opacity="0.91" transform="rotate(30 21.75 26.25)"/><rect x="22.38" y="25.62" width="1.25" height="1.25" fill="#8fb8f6" opacity="0.93" transform="rotate(30 23.00 26.25)"/><rect x="23.62" y="25.62" width="1.25" height="1.25" fill="#1c2b5e" opacity="0.80" transform="rotate(30 24.25 26.25)"/><rect x="29.88" y="25.62" width="1.25" height="1.25" fill="#3f7fe9" opacity="1.00" transform="rotate(30 30.50 26.25)"/><rect x="31.12" y="25.62" width="1.25" height="1.25" fill="#3f7fe9" opacity="1.00" transform="rotate(30 31.75 26.25)"/><rect x="32.38" y="25.62" width="1.25" height="1.25" fill="#3f7fe9" opacity="1.00" transform="rotate(30 33.00 26.25)"/><rect x="33.62" y="25.62" width="1.25" height="1.25" fill="#3f7fe9" opacity="1.00" transform="rotate(30 34.25 26.25)"/><rect x="34.88" y="25.62" width="1.25" height="1.25" fill="#8fb8f6" opacity="1.00" transform="rotate(30 35.50 26.25)"/><rect x="9.88" y="26.88" width="1.25" height="1.25" fill="#6fa2f2" opacity="0.33" transform="rotate(30 10.50 27.50)"/><rect x="12.38" y="26.88" width="1.25" height="1.25" fill="#8fb8f6" opacity="0.47" transform="rotate(30 13.00 27.50)"/><rect x="14.88" y="26.88" width="1.25" height="1.25" fill="#6fa2f2" opacity="0.61" transform="rotate(30 15.50 27.50)"/><rect x="18.62" y="26.88" width="1.25" height="1.25" fill="#3f7fe9" opacity="0.86" transform="rotate(30 19.25 27.50)"/><rect x="19.88" y="26.88" width="1.25" height="1.25" fill="#1c2b5e" opacity="0.88" transform="rotate(30 20.50 27.50)"/><rect x="22.38" y="26.88" width="1.25" height="1.25" fill="#3f7fe9" opacity="0.93" transform="rotate(30 23.00 27.50)"/><rect x="23.62" y="26.88" width="1.25" height="1.25" fill="#3f7fe9" opacity="0.96" transform="rotate(30 24.25 27.50)"/><rect x="24.88" y="26.88" width="1.25" height="1.25" fill="#3f7fe9" opacity="0.98" transform="rotate(30 25.50 27.50)"/><rect x="26.12" y="26.88" width="1.25" height="1.25" fill="#23448f" opacity="1.00" transform="rotate(30 26.75 27.50)"/><rect x="27.38" y="26.88" width="1.25" height="1.25" fill="#3f7fe9" opacity="1.00" transform="rotate(30 28.00 27.50)"/><rect x="28.62" y="26.88" width="1.25" height="1.25" fill="#2a62c9" opacity="1.00" transform="rotate(30 29.25 27.50)"/><rect x="29.88" y="26.88" width="1.25" height="1.25" fill="#23448f" opacity="1.00" transform="rotate(30 30.50 27.50)"/><rect x="31.12" y="26.88" width="1.25" height="1.25" fill="#3f7fe9" opacity="1.00" transform="rotate(30 31.75 27.50)"/><rect x="32.38" y="26.88" width="1.25" height="1.25" fill="#3f7fe9" opacity="1.00" transform="rotate(30 33.00 27.50)"/><rect x="33.62" y="26.88" width="1.25" height="1.25" fill="#1c2b5e" opacity="1.00" transform="rotate(30 34.25 27.50)"/><rect x="34.88" y="26.88" width="1.25" height="1.25" fill="#1a2750" opacity="1.00" transform="rotate(30 35.50 27.50)"/><rect x="11.12" y="28.12" width="1.25" height="1.25" fill="#1c2b5e" opacity="0.40" transform="rotate(30 11.75 28.75)"/><rect x="18.62" y="28.12" width="1.25" height="1.25" fill="#a9c8f8" opacity="0.86" transform="rotate(30 19.25 28.75)"/><rect x="19.88" y="28.12" width="1.25" height="1.25" fill="#3f7fe9" opacity="0.88" transform="rotate(30 20.50 28.75)"/><rect x="21.12" y="28.12" width="1.25" height="1.25" fill="#55607a" opacity="0.91" transform="rotate(30 21.75 28.75)"/><rect x="24.88" y="28.12" width="1.25" height="1.25" fill="#2a62c9" opacity="0.98" transform="rotate(30 25.50 28.75)"/><rect x="26.12" y="28.12" width="1.25" height="1.25" fill="#3f7fe9" opacity="1.00" transform="rotate(30 26.75 28.75)"/><rect x="27.38" y="28.12" width="1.25" height="1.25" fill="#3f7fe9" opacity="1.00" transform="rotate(30 28.00 28.75)"/><rect x="28.62" y="28.12" width="1.25" height="1.25" fill="#2a62c9" opacity="1.00" transform="rotate(30 29.25 28.75)"/><rect x="29.88" y="28.12" width="1.25" height="1.25" fill="#3f7fe9" opacity="1.00" transform="rotate(30 30.50 28.75)"/><rect x="31.12" y="28.12" width="1.25" height="1.25" fill="#3f7fe9" opacity="1.00" transform="rotate(30 31.75 28.75)"/><rect x="32.38" y="28.12" width="1.25" height="1.25" fill="#3f7fe9" opacity="1.00" transform="rotate(30 33.00 28.75)"/><rect x="33.62" y="28.12" width="1.25" height="1.25" fill="#3f7fe9" opacity="1.00" transform="rotate(30 34.25 28.75)"/><rect x="11.12" y="29.38" width="1.25" height="1.25" fill="#a9c8f8" opacity="0.40" transform="rotate(30 11.75 30.00)"/><rect x="18.62" y="29.38" width="1.25" height="1.25" fill="#55607a" opacity="0.80" transform="rotate(30 19.25 30.00)"/><rect x="19.88" y="29.38" width="1.25" height="1.25" fill="#6fa2f2" opacity="0.88" transform="rotate(30 20.50 30.00)"/><rect x="21.12" y="29.38" width="1.25" height="1.25" fill="#3f7fe9" opacity="0.91" transform="rotate(30 21.75 30.00)"/><rect x="22.38" y="29.38" width="1.25" height="1.25" fill="#1a2750" opacity="0.93" transform="rotate(30 23.00 30.00)"/><rect x="23.62" y="29.38" width="1.25" height="1.25" fill="#3f7fe9" opacity="0.96" transform="rotate(30 24.25 30.00)"/><rect x="24.88" y="29.38" width="1.25" height="1.25" fill="#23448f" opacity="0.98" transform="rotate(30 25.50 30.00)"/><rect x="26.12" y="29.38" width="1.25" height="1.25" fill="#23448f" opacity="1.00" transform="rotate(30 26.75 30.00)"/><rect x="27.38" y="29.38" width="1.25" height="1.25" fill="#23448f" opacity="1.00" transform="rotate(30 28.00 30.00)"/><rect x="28.62" y="29.38" width="1.25" height="1.25" fill="#6fa2f2" opacity="1.00" transform="rotate(30 29.25 30.00)"/><rect x="29.88" y="29.38" width="1.25" height="1.25" fill="#8fb8f6" opacity="1.00" transform="rotate(30 30.50 30.00)"/><rect x="31.12" y="29.38" width="1.25" height="1.25" fill="#3f7fe9" opacity="1.00" transform="rotate(30 31.75 30.00)"/><rect x="32.38" y="29.38" width="1.25" height="1.25" fill="#23448f" opacity="1.00" transform="rotate(30 33.00 30.00)"/><rect x="12.38" y="30.62" width="1.25" height="1.25" fill="#3f7fe9" opacity="0.47" transform="rotate(30 13.00 31.25)"/><rect x="13.62" y="30.62" width="1.25" height="1.25" fill="#cfe0fb" opacity="0.54" transform="rotate(30 14.25 31.25)"/><rect x="14.88" y="30.62" width="1.25" height="1.25" fill="#1c2b5e" opacity="0.61" transform="rotate(30 15.50 31.25)"/><rect x="17.38" y="30.62" width="1.25" height="1.25" fill="#1c2b5e" opacity="0.74" transform="rotate(30 18.00 31.25)"/><rect x="18.62" y="30.62" width="1.25" height="1.25" fill="#3f7fe9" opacity="0.80" transform="rotate(30 19.25 31.25)"/><rect x="19.88" y="30.62" width="1.25" height="1.25" fill="#cfe0fb" opacity="0.80" transform="rotate(30 20.50 31.25)"/><rect x="21.12" y="30.62" width="1.25" height="1.25" fill="#3f7fe9" opacity="0.91" transform="rotate(30 21.75 31.25)"/><rect x="22.38" y="30.62" width="1.25" height="1.25" fill="#3f7fe9" opacity="0.93" transform="rotate(30 23.00 31.25)"/><rect x="23.62" y="30.62" width="1.25" height="1.25" fill="#1a2750" opacity="0.96" transform="rotate(30 24.25 31.25)"/><rect x="24.88" y="30.62" width="1.25" height="1.25" fill="#1c2b5e" opacity="0.98" transform="rotate(30 25.50 31.25)"/><rect x="26.12" y="30.62" width="1.25" height="1.25" fill="#1a2750" opacity="1.00" transform="rotate(30 26.75 31.25)"/><rect x="27.38" y="30.62" width="1.25" height="1.25" fill="#2a62c9" opacity="1.00" transform="rotate(30 28.00 31.25)"/><rect x="28.62" y="30.62" width="1.25" height="1.25" fill="#1a2750" opacity="1.00" transform="rotate(30 29.25 31.25)"/><rect x="29.88" y="30.62" width="1.25" height="1.25" fill="#3f7fe9" opacity="1.00" transform="rotate(30 30.50 31.25)"/><rect x="31.12" y="30.62" width="1.25" height="1.25" fill="#8fb8f6" opacity="1.00" transform="rotate(30 31.75 31.25)"/><rect x="23.62" y="31.88" width="1.25" height="1.25" fill="#3f7fe9" opacity="0.96" transform="rotate(30 24.25 32.50)"/><rect x="24.88" y="31.88" width="1.25" height="1.25" fill="#3f7fe9" opacity="0.98" transform="rotate(30 25.50 32.50)"/><rect x="26.12" y="31.88" width="1.25" height="1.25" fill="#3f7fe9" opacity="1.00" transform="rotate(30 26.75 32.50)"/><rect x="27.38" y="31.88" width="1.25" height="1.25" fill="#6fa2f2" opacity="1.00" transform="rotate(30 28.00 32.50)"/><rect x="28.62" y="31.88" width="1.25" height="1.25" fill="#2a62c9" opacity="1.00" transform="rotate(30 29.25 32.50)"/><circle cx="26.9" cy="23.4" r="4.5" fill="#fff"/><path d="M29.8 30.9L32.6 28.4L36.8 34.6L33.8 36.9Z" fill="#3577e6"/><rect x="30.85" y="29.85" width="1.3" height="1.3" fill="#1c2b5e" transform="rotate(30 31.5 30.5)"/><rect x="32.95" y="32.35" width="1.3" height="1.3" fill="#1a2750" transform="rotate(30 33.6 33.0)"/><rect x="34.15" y="34.550000000000004" width="1.3" height="1.3" fill="#8fb8f6" transform="rotate(30 34.8 35.2)"/><rect x="32.25" y="34.550000000000004" width="1.3" height="1.3" fill="#1c2b5e" transform="rotate(30 32.9 35.2)"/><rect x="34.65" y="32.85" width="1.3" height="1.3" fill="#23448f" transform="rotate(30 35.3 33.5)"/><rect x="31.950000000000003" y="31.550000000000004" width="1.3" height="1.3" fill="#8fb8f6" transform="rotate(30 32.6 32.2)"/></svg>
<svg class="r" style="left:1453.1px;top:13.55px" width="26" height="26" viewBox="0 0 26 26"><circle cx="13" cy="13" r="10.5" fill="none" stroke="#4b5877" stroke-width="1.55"/><path d="M10.5 10.7Q10.6 8.3 13 8.3Q15.5 8.3 15.5 10.5Q15.5 11.8 14.1 12.6Q13 13.3 13 14.8" fill="none" stroke="#4b5877" stroke-width="1.7"/><circle cx="13" cy="17.4" r="1.1" fill="#4b5877"/></svg>
<svg class="r" style="left:1488.2px;top:13px" width="37" height="27" viewBox="0 0 37 27"><defs><linearGradient id="shg" x1="0" y1="0" x2="0" y2="1"><stop offset="0" stop-color="#b89b78"/><stop offset="0.55" stop-color="#c9b08e"/><stop offset="1" stop-color="#f3e3cf"/></linearGradient><clipPath id="avc"><circle cx="18.35" cy="13.5" r="18.35"/></clipPath></defs><g clip-path="url(#avc)"><rect x="0" y="0" width="37" height="27" fill="#fcefdf"/><path d="M10 27Q10.6 21.4 14.6 20.7L21.9 20.7Q25.8 21.4 26.4 27Z" fill="url(#shg)"/><path d="M15.6 16.5H20.9V20.3Q18.3 23.2 15.6 20.3Z" fill="#eea48a"/><ellipse cx="18.2" cy="12.6" rx="4.4" ry="5.6" fill="#f4b79b"/><ellipse cx="13.6" cy="12.9" rx="0.9" ry="1.4" fill="#eea48a"/><ellipse cx="22.8" cy="12.9" rx="0.9" ry="1.4" fill="#eea48a"/><path d="M13.6 11.2Q12.8 5.2 16 4.4Q18.4 3 21 4.4Q24 5.4 22.9 11.2L22.3 9.4Q19.6 9.6 18.9 7.8Q17.2 9.6 14.2 9.4Z" fill="#1b1b1d"/><path d="M14.3 11.6H17.4V13.3H14.3Z M19 11.6H22.1V13.3H19Z M17.4 12.2H19" fill="none" stroke="#4a3a36" stroke-width="0.55"/></g></svg>
<svg class="r" style="left:9.8px;top:106.2px" width="20" height="20" viewBox="0 0 20 20"><circle cx="10" cy="10" r="8.45" fill="none" stroke="#2356c5" stroke-width="1.9"/><path d="M6.6 10H13.4M10 6.6V13.4" stroke="#2356c5" stroke-width="1.9" stroke-linecap="round"/></svg>
<svg class="r" style="left:152px;top:145px" width="24" height="24" viewBox="0 0 24 24"><circle cx="10.2" cy="10" r="6.05" fill="none" stroke="#2356c5" stroke-width="1.6"/><path d="M14.6 14.4L19.4 19.2" stroke="#2356c5" stroke-width="1.7" stroke-linecap="round"/></svg>
<svg class="r" style="left:332px;top:100px" width="18" height="17" viewBox="0 0 18 17"><g transform="translate(3.0 14.4) rotate(-45)"><path d="M0.3 0L2.5 -1.8H10.1V1.8H2.5Z" fill="none" stroke="#2e364a" stroke-width="1.15" stroke-linejoin="round"/><rect x="11.5" y="-2.35" width="3.3" height="4.7" rx="0.6" fill="#2e364a"/></g></svg>
<svg class="r" style="left:1180.9px;top:99.0px" width="20" height="20" viewBox="0 0 20 20"><path d="M15.4 7.2A5.8 5.8 0 1 0 15.6 12.3" fill="none" stroke="#8a8a8a" stroke-width="1.45" stroke-linecap="round"/><path d="M16.3 3.9V8.2H12Z" fill="#8a8a8a"/></svg>
<svg class="r" style="left:1502.7px;top:97px" width="23" height="23" viewBox="0 0 24 24"><path fill="#575f73" d="M6 19c0 1.1.9 2 2 2h8c1.1 0 2-.9 2-2V7H6v12zM8 9h8v10H8V9zm7.5-5l-1-1h-5l-1 1H5v2h14V4z"/></svg>
<svg class="r" style="left:640px;top:154px" width="16" height="15" viewBox="0 0 16 15"><path d="M1.9 2.4H14.6L9.5 8.2V12.3L6.8 13.2V8.2Z" fill="none" stroke="#4a5578" stroke-width="1.2" stroke-linejoin="round"/></svg>
<div class="r" style="left:1512.4px;top:546.2px;width:30px;height:117.3px;background:#13234a;border-radius:6px;box-shadow:-1px 0 3px rgba(0,0,0,.25)"></div>
<span class="t" style="left:1527.8px;top:593.5px;font-size:13.5px;color:#fff;-webkit-text-stroke:0.3px #fff;transform:translate(-50%,-50%) rotate(-90deg);">Chat &amp; Help</span>
<svg class="r" style="left:1521px;top:638px" width="15" height="14.5" viewBox="0 0 15 14.5"><path d="M1.5 0H15V14.5H1.5A1.5 1.5 0 0 1 0 13V1.5A1.5 1.5 0 0 1 1.5 0Z" fill="#fff"/><path d="M4.3 3.5V11.5 M6.6 5V11.5 M8.9 5V11.5" stroke="#13234a" stroke-width="1"/></svg>
</div>
</body></html>
